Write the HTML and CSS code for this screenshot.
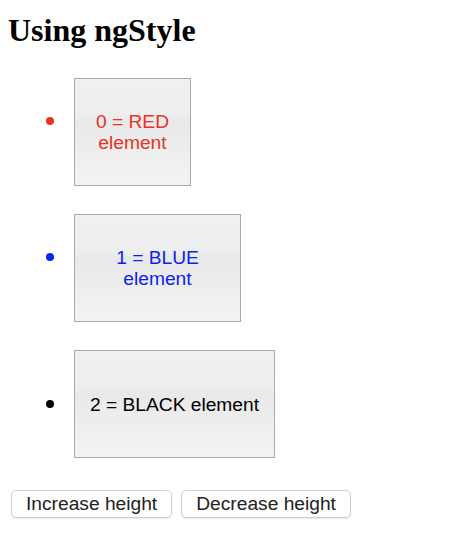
FILE: index.html
```html
<!DOCTYPE html>
<html>
<head>
<meta charset="utf-8">
<link rel="stylesheet" href="styles.css">
</head>
<body>
<h1 class="title">Using ngStyle</h1>
<ul class="list">
  <li class="item red"><button class="box box-0">0 = RED element</button></li>
  <li class="item blue"><button class="box box-1">1 = BLUE element</button></li>
  <li class="item black"><button class="box box-2">2 = BLACK element</button></li>
</ul>
<div class="controls">
  <button class="ctl">Increase height</button>
  <button class="ctl">Decrease height</button>
</div>
</body>
</html>
```
FILE: styles.css
```css
html, body {
  background: #ffffff;
}
body {
  margin: 0;
  padding: 8px;
  font-family: "Liberation Sans", Arial, sans-serif;
}
.title {
  font-family: "Liberation Serif", "Times New Roman", serif;
  font-weight: bold;
  font-size: 32px;
  margin: 4px 0 0 0;
  color: #000;
}
.list {
  list-style: none;
  margin: 29px 0 0 0;
  padding: 0 0 0 38px;
  font-size: 19.2px;
}
.item {
  display: flex;
  align-items: baseline;
  margin: 0 0 28px 0;
}
.item::before {
  content: "";
  display: block;
  width: 8px;
  height: 8px;
  border-radius: 50%;
  background: currentColor;
  margin: 0 20px 0 0;
  flex: none;
  transform: translateY(-3px);
}
.red { color: #ea3323; }
.blue { color: #0a24f0; }
.black { color: #000; }
.box {
  font-family: "Liberation Sans", Arial, sans-serif;
  font-size: 19.2px;
  line-height: 21px;
  color: inherit;
  height: 108px;
  padding: 0 8px;
  border: 1px solid #a8a8a8;
  border-radius: 0;
  background: linear-gradient(#f0f0f0 0%, #eeeeee 35%, #e9e9e9 40%, #f3f3f3 100%);
  text-align: center;
}
.box-0 { width: 117px; }
.box-1 { width: 167px; }
.box-2 { width: 201px; }
.controls {
  display: flex;
  gap: 9px;
  margin: 32px 0 0 3px;
}
.ctl {
  font-family: "Liberation Sans", Arial, sans-serif;
  font-size: 19.2px;
  color: #222;
  height: 28px;
  padding: 0 14px;
  background: #fff;
  border: 1px solid #cfcfcf;
  border-radius: 5px;
  box-shadow: 0 1px 1px rgba(0,0,0,0.08);
}
```
